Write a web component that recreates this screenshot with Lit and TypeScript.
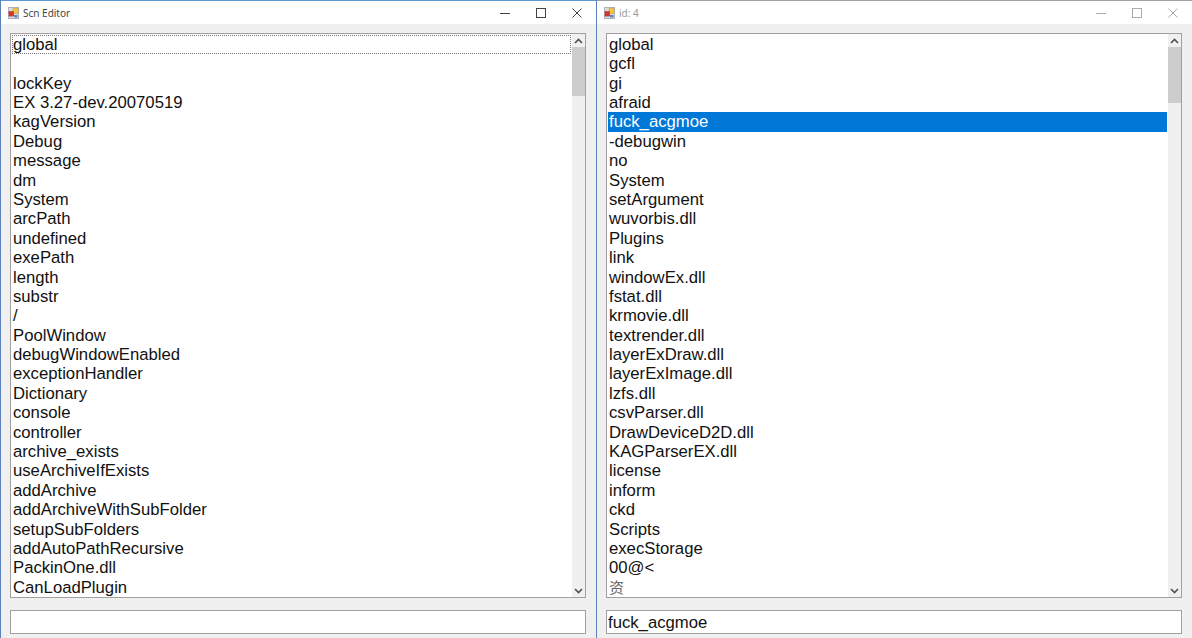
import { LitElement, html, css, svg } from "lit";
import { customElement, property } from "lit/decorators.js";

const LEFT = ["global","","lockKey","EX 3.27-dev.20070519","kagVersion","Debug","message","dm","System","arcPath","undefined","exePath","length","substr","/","PoolWindow","debugWindowEnabled","exceptionHandler","Dictionary","console","controller","archive_exists","useArchiveIfExists","addArchive","addArchiveWithSubFolder","setupSubFolders","addAutoPathRecursive","PackinOne.dll","CanLoadPlugin"];
const RIGHT = ["global","gcfl","gi","afraid","fuck_acgmoe","-debugwin","no","System","setArgument","wuvorbis.dll","Plugins","link","windowEx.dll","fstat.dll","krmovie.dll","textrender.dll","layerExDraw.dll","layerExImage.dll","lzfs.dll","csvParser.dll","DrawDeviceD2D.dll","KAGParserEX.dll","license","inform","ckd","Scripts","execStorage","00@<","资"];

const appIcon = svg`<svg class="icon" width="11" height="12" viewBox="0 0 11 12">
  <rect x=".5" y=".5" width="10" height="11" fill="#dcdce0" stroke="#b0b0b8"/>
  <rect x="5" y="1.5" width="5" height="5" fill="#f2c640" stroke="#cfa020" stroke-width=".5"/>
  <rect x="1" y="4.5" width="4.6" height="4.6" fill="#d8352a" stroke="#a52a20" stroke-width=".5"/>
  <rect x="6" y="8" width="3.5" height="2.5" fill="#5a84c8"/>
</svg>`;

@customElement("win-dow")
class WinDow extends LitElement {
  @property() heading = "";
  @property({ type: Array }) items: string[] = [];
  @property({ type: Number }) selected = -1;
  @property({ type: Number }) focused = -1;
  @property({ type: Number }) thumb = 49;
  @property() value = "";
  @property({ type: Boolean }) inactive = false;

  static styles = css`
    :host { display: flex; flex-direction: column; min-width: 0; height: 638px; box-sizing: border-box; background: #f0f0f0; font-family: "Liberation Sans", Arial, "Noto Sans CJK SC", sans-serif; color: #111; }
    .root { display: flex; flex-direction: column; height: 100%; }
    .title { height: 24px; flex: none; background: #fff; display: flex; align-items: center; font-size: 10px; font-family: "Noto Sans", "Open Sans", sans-serif; color: #444; padding: 0 1px 0 7px; border-top: 1px solid #5b9bd5; box-sizing: border-box; }
    .inactive .title { color: #999; border-top-color: #a0a0a0; }
    .icon { display: block; margin-right: 4px; }
    .text { flex: 1; }
    .btn { width: 36px; height: 22px; display: flex; align-items: center; justify-content: center; }
    .btn svg { display: block; stroke: #444; fill: none; }
    .inactive .btn svg { stroke: #aaa; }
    .body { flex: 1; display: flex; flex-direction: column; padding: 9px 10px 0 9px; }
    .list { height: 565px; box-sizing: border-box; border: 1px solid #a0a0a0; background: #fff; display: flex; overflow: hidden; }
    .rows { flex: 1; min-width: 0; padding: 0.85px 1px 0; font-size: 16.7px; overflow: hidden; }
    .row { height: 19.4px; line-height: 19.4px; padding-left: 1px; white-space: nowrap; box-sizing: border-box; }
    .row.sel { background: #0078d7; color: #fff; }
    .row.foc { outline: 1px dotted #777; outline-offset: -1px; }
    .row.cjk { color: #666; font-size: 15px; }
    .bar { width: 13px; flex: none; background: #f0f0f0; display: flex; flex-direction: column; }
    .arrow { height: 13px; flex: none; display: flex; align-items: center; justify-content: center; }
    .arrow svg { display: block; }
    .bar-thumb { flex: none; background: #cdcdcd; }
    .track { flex: 1; }
    .input { margin-top: 12px; height: 24px; box-sizing: border-box; border: 1px solid #a0a0a0; background: #fff; font-size: 16.7px; line-height: 24px; padding-left: 1px; white-space: nowrap; overflow: hidden; }
  `;

  render() {
    return html`<div class="root ${this.inactive ? "inactive" : ""}">
      <div class="title">
        ${appIcon}<span class="text">${this.heading}</span>
        <span class="btn"><svg width="10" height="10"><path d="M0 5.5h10"/></svg></span>
        <span class="btn"><svg width="10" height="10"><rect x=".5" y=".5" width="9" height="9"/></svg></span>
        <span class="btn"><svg width="10" height="10"><path d="M.5.5l9 9M9.5.5l-9 9"/></svg></span>
      </div>
      <div class="body">
        <div class="list">
          <div class="rows">
            ${this.items.map((t, i) => html`<div class="row ${i === this.selected ? "sel" : ""} ${i === this.focused ? "foc" : ""} ${t.charCodeAt(0) > 0x2e80 ? "cjk" : ""}">${t}</div>`)}
          </div>
          <div class="bar">
            <div class="arrow"><svg width="9" height="6" fill="none" stroke="#505050" stroke-width="1.6"><path d="M1 5l3.5-3.5L8 5"/></svg></div>
            <div class="bar-thumb" style="height:${this.thumb}px"></div>
            <div class="track"></div>
            <div class="arrow"><svg width="9" height="6" fill="none" stroke="#505050" stroke-width="1.6"><path d="M1 1l3.5 3.5L8 1"/></svg></div>
          </div>
        </div>
        <div class="input">${this.value}</div>
      </div>
    </div>`;
  }
}

@customElement("app-root")
class AppRoot extends LitElement {
  static styles = css`
    :host { display: flex; width: 1192px; height: 638px; overflow: hidden; background: #5b7fb8; padding-left: 1px; box-sizing: border-box; }
    win-dow.l { flex: 0 0 595px; }
    .gap { flex: 0 0 1px; background: #5b7fb8; }
    win-dow.r { flex: 0 0 595px; }
  `;
  render() {
    return html`
      <win-dow class="l" heading="Scn Editor" .items=${LEFT} .focused=${0} .thumb=${49}></win-dow>
      <div class="gap"></div>
      <win-dow class="r" heading="id: 4" .items=${RIGHT} .selected=${4} .thumb=${56} value="fuck_acgmoe" inactive></win-dow>`;
  }
}
